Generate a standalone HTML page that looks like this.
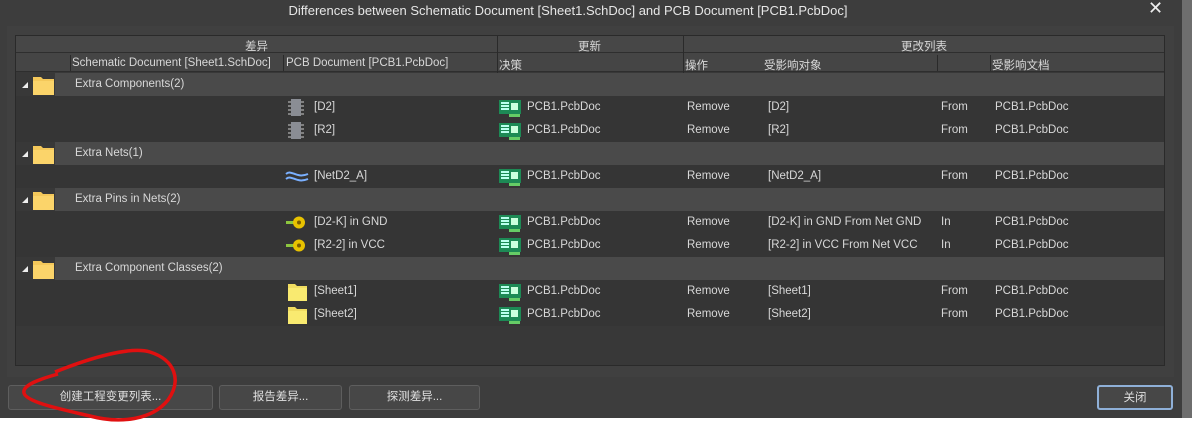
<!DOCTYPE html><html><head><style>
body{margin:0;width:1192px;height:425px;background:#fff;position:relative;overflow:hidden;font-family:"Liberation Sans","Noto Sans CJK SC",sans-serif;font-size:11.5px;color:#d8d8d8}
div{position:absolute;box-sizing:border-box}
.t{white-space:nowrap}
.btn{top:385px;height:25px;border:1px solid #5e5e5e;border-radius:3px;background:#474747;text-align:center;line-height:23px;color:#e0e0e0}
</style></head><body>
<div style="left:0;top:0;width:1182px;height:418px;background:#3d3d3d"></div>
<div style="left:1182px;top:0;width:10px;height:418px;background:#6e6e6e"></div>
<div class="t" style="left:0;width:1136px;top:3px;text-align:center;font-size:13px;color:#e6e6e6">Differences between Schematic Document [Sheet1.SchDoc] and PCB Document [PCB1.PcbDoc]</div>
<div class="t" style="left:1148px;top:-2px;font-size:18px;color:#eee">✕</div>
<div style="left:7px;top:26px;width:1167px;height:351px;background:#404040"></div>
<div style="left:15px;top:35px;width:1150px;height:331px;background:#383838;border:1px solid #2a2a2a"></div>
<div style="left:16px;top:36px;width:1148px;height:17px;background:#474747;border-bottom:1px solid #2e2e2e"></div>
<div style="left:16px;top:53px;width:1148px;height:19px;background:#454545;border-bottom:1px solid #2e2e2e"></div>
<div class="t" style="left:245px;top:38px">差异</div>
<div class="t" style="left:578px;top:38px">更新</div>
<div class="t" style="left:901px;top:38px">更改列表</div>
<div style="left:497px;top:36px;width:1px;height:290px;background:#2a2a2a"></div>
<div style="left:683px;top:36px;width:1px;height:290px;background:#2a2a2a"></div>
<div style="left:70px;top:55px;width:1px;height:16px;background:#2a2a2a"></div>
<div style="left:283px;top:55px;width:1px;height:16px;background:#2a2a2a"></div>
<div style="left:937px;top:55px;width:1px;height:16px;background:#2a2a2a"></div>
<div style="left:990px;top:55px;width:1px;height:16px;background:#2a2a2a"></div>
<div class="t" style="left:72px;top:57px">Schematic Document [Sheet1.SchDoc]</div>
<div class="t" style="left:286px;top:57px">PCB Document [PCB1.PcbDoc]</div>
<div class="t" style="left:499px;top:57px">决策</div>
<div class="t" style="left:685px;top:57px">操作</div>
<div class="t" style="left:764px;top:57px">受影响对象</div>
<div class="t" style="left:992px;top:57px">受影响文档</div>
<div id="rows"></div>
<svg style="position:absolute;left:0;top:0" width="1192" height="425">
<defs>
<g id="pcb"><rect x="0" y="0" width="22" height="14" fill="#1d8a55"/><rect x="2" y="2" width="8" height="2" fill="#bfe"/><rect x="2" y="5" width="8" height="2" fill="#bfe"/><rect x="2" y="8" width="8" height="2" fill="#bfe"/><rect x="12" y="3" width="7" height="7" fill="#cfd"/><rect x="10" y="14" width="11" height="3" fill="#6c6"/></g>
<g id="fold"><path d="M0 3h8l2 2h11v16H0z" fill="#f4c85a"/><rect x="0" y="7" width="21" height="14" fill="#fbd46a"/></g>
<g id="yfold"><path d="M0 2h7l2 2h10v15H0z" fill="#f0dc60"/><rect x="0" y="6" width="19" height="13" fill="#f9ea70"/></g>
<g id="chip"><rect x="3" y="0" width="10" height="17" fill="#8a8d94"/><path d="M0 3h3M0 7h3M0 11h3M0 15h3M13 3h3M13 7h3M13 11h3M13 15h3" stroke="#999" stroke-width="1.5"/></g>
<g id="pin"><rect x="0" y="6" width="9" height="3" fill="#8cc63f"/><circle cx="13" cy="7.5" r="6" fill="#e8c200"/><circle cx="13" cy="7.5" r="2" fill="#7a5c00"/></g>
</defs>
</svg>
<script>
var rows=[["g","Extra Components(2)"],["c","[D2]","chip","Remove","[D2]","From"],["c","[R2]","chip","Remove","[R2]","From"],["g","Extra Nets(1)"],["c","[NetD2_A]","net","Remove","[NetD2_A]","From"],["g","Extra Pins in Nets(2)"],["c","[D2-K] in GND","pin","Remove","[D2-K] in GND From Net GND","In"],["c","[R2-2] in VCC","pin","Remove","[R2-2] in VCC From Net VCC","In"],["g","Extra Component Classes(2)"],["c","[Sheet1]","yfold","Remove","[Sheet1]","From"],["c","[Sheet2]","yfold","Remove","[Sheet2]","From"]];
var h="",s="";
rows.forEach(function(r,i){var y=73+i*23;
if(r[0]=="g"){h+='<div style="left:55px;top:'+y+'px;width:1109px;height:23px;background:#4a4a4a"></div><div class="t" style="left:75px;top:'+(y+5)+'px">'+r[1]+'</div>';
s+='<path d="M22 '+(y+15)+'l6 -6v6z" fill="#eee"/><use href="#fold" x="33" y="'+(y+1)+'"/>';}
else{h+='<div style="left:16px;top:'+y+'px;width:1148px;height:23px;background:#353535"></div>';
h+='<div class="t" style="left:314px;top:'+(y+5)+'px">'+r[1]+'</div><div class="t" style="left:527px;top:'+(y+5)+'px">PCB1.PcbDoc</div><div class="t" style="left:687px;top:'+(y+5)+'px">'+r[3]+'</div><div class="t" style="left:768px;top:'+(y+5)+'px">'+r[4]+'</div><div class="t" style="left:941px;top:'+(y+5)+'px">'+r[5]+'</div><div class="t" style="left:995px;top:'+(y+5)+'px">PCB1.PcbDoc</div>';
s+='<use href="#pcb" x="499" y="'+(y+4)+'"/>';
if(r[2]=="chip")s+='<use href="#chip" x="288" y="'+(y+3)+'"/>';
if(r[2]=="pin")s+='<use href="#pin" x="286" y="'+(y+4)+'"/>';
if(r[2]=="yfold")s+='<use href="#yfold" x="288" y="'+(y+2)+'"/>';
if(r[2]=="net")s+='<path d="M286 '+(y+9)+'c6 -5 10 5 22 0M286 '+(y+14)+'c6 -5 10 5 22 0" stroke="#7ab0ff" stroke-width="2" fill="none"/>';}
});
document.getElementById("rows").outerHTML=h;
var sv=document.querySelector("svg");sv.innerHTML+=s+'<path d="M55 372C90 358 130 346 150 352C175 360 182 380 168 400C152 420 120 424 90 416C60 409 26 402 24 393C22 385 40 379 58 374" stroke="#e01010" stroke-width="3.5" fill="none"/>';
document.body.appendChild(sv);
</script>
<div class="btn" style="left:8px;width:205px">创建工程变更列表...</div>
<div class="btn" style="left:219px;width:123px">报告差异...</div>
<div class="btn" style="left:349px;width:131px">探测差异...</div>
<div class="btn" style="left:1097px;width:76px;border:2px solid #8fb0d8">关闭</div>
<script>document.body.appendChild(document.querySelector("svg"));</script>
</body></html>
